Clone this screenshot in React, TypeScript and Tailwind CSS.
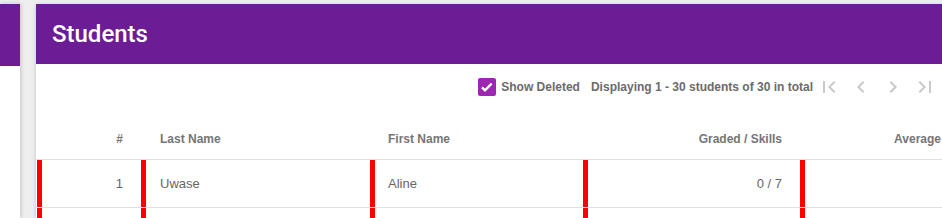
import type { ReactNode } from 'react';

const PURPLE = 'bg-[#6c1c94]';

function PagerIcon({ d }: { d: string }) {
  return (
    <button type="button" className="flex h-8 w-8 items-center justify-center" disabled>
      <svg viewBox="0 0 24 24" width="24" height="24" fill="#c9c9c9" aria-hidden>
        <path d={d} />
      </svg>
    </button>
  );
}

const PAGER = [
  'M18.41 16.59L13.82 12l4.59-4.59L17 6l-6 6 6 6zM6 6h2v12H6z',
  'M15.41 7.41L14 6l-6 6 6 6 1.41-1.41L10.83 12z',
  'M10 6L8.59 7.41 13.17 12l-4.58 4.59L10 18l6-6z',
  'M5.59 7.41L10.18 12l-4.59 4.59L7 18l6-6-6-6zM16 6h2v12h-2z',
];

interface Col {
  label: string;
  width: string;
  align: 'left' | 'right';
  pad: string;
}

const COLS: Col[] = [
  { label: '#', width: 'w-[104px]', align: 'right', pad: 'pr-[18px]' },
  { label: 'Last Name', width: 'w-[229px]', align: 'left', pad: 'pl-[14px]' },
  { label: 'First Name', width: 'w-[213px]', align: 'left', pad: 'pl-[13px]' },
  { label: 'Graded / Skills', width: 'w-[217px]', align: 'right', pad: 'pr-[18px]' },
  { label: 'Average', width: 'w-[159px]', align: 'right', pad: 'pr-[18px]' },
];

// second row sits below the fold, only its red edges show
const ROWS = [
  ['1', 'Uwase', 'Aline', '0 / 7', ''],
  ['', '', '', '', ''],
];

function Cell({ col, header, children }: { col: Col; header?: boolean; children: ReactNode }) {
  return (
    <div
      className={`${col.width} ${col.pad} shrink-0 border-l-[5px] ${
        header ? 'border-transparent' : 'border-[#ff0000]'
      } flex ${header ? 'items-end pb-[11px]' : 'items-center'} ${
        col.align === 'right' ? 'justify-end' : 'justify-start'
      }`}
    >
      {children}
    </div>
  );
}

export default function App() {
  return (
    <div
      className="flex h-[218px] w-[942px] overflow-hidden bg-[#eeeeee]"
      style={{ fontFamily: '"Liberation Sans", Arial, sans-serif' }}
    >
      {/* left panel, mostly scrolled out of view */}
      <div className="mt-[4px] w-[20px] shrink-0 bg-white shadow-[1px_0_4px_rgba(0,0,0,0.18)]">
        <div className={`${PURPLE} h-[62px]`} />
      </div>

      <div className="ml-[16px] mt-[4px] w-[921px] shrink-0 bg-white shadow-[0_1px_4px_rgba(0,0,0,0.2)]">
        <div className={`${PURPLE} flex h-[60px] items-center px-[16px]`}>
          <h1
            className="text-[24px] font-medium leading-none text-white"
            style={{ fontFamily: 'Roboto, "Liberation Sans", sans-serif' }}
          >
            Students
          </h1>
        </div>

        <div className="flex h-[46px] items-center justify-end pr-[16px] text-[12px] font-bold text-[#6b6b6b]">
          <span className="flex h-[18px] w-[18px] items-center justify-center rounded-[2px] bg-[#9c27b0]">
            <svg viewBox="0 0 24 24" width="16" height="16" fill="none" stroke="white" strokeWidth="3.4" aria-hidden>
              <path d="M4.5 12.5l4.5 4.5 10-10" />
            </svg>
          </span>
          <span className="ml-[5px]">Show Deleted</span>
          <span className="ml-[11px]">Displaying 1 - 30 students of 30 in total</span>
          {PAGER.map((d) => (
            <PagerIcon key={d} d={d} />
          ))}
        </div>

        <div className="flex h-[50px] border-b border-[#e0e0e0] pl-px text-[12px] font-bold text-[#757575]">
          {COLS.map((c) => (
            <Cell key={c.label} col={c} header>
              {c.label}
            </Cell>
          ))}
        </div>

        {ROWS.map((r, ri) => (
          <div key={ri} className="flex h-[48px] border-b border-[#e0e0e0] pl-px text-[13px] text-[#666666]">
            {COLS.map((c, i) => (
              <Cell key={c.label} col={c}>
                {r[i]}
              </Cell>
            ))}
          </div>
        ))}
      </div>
    </div>
  );
}
